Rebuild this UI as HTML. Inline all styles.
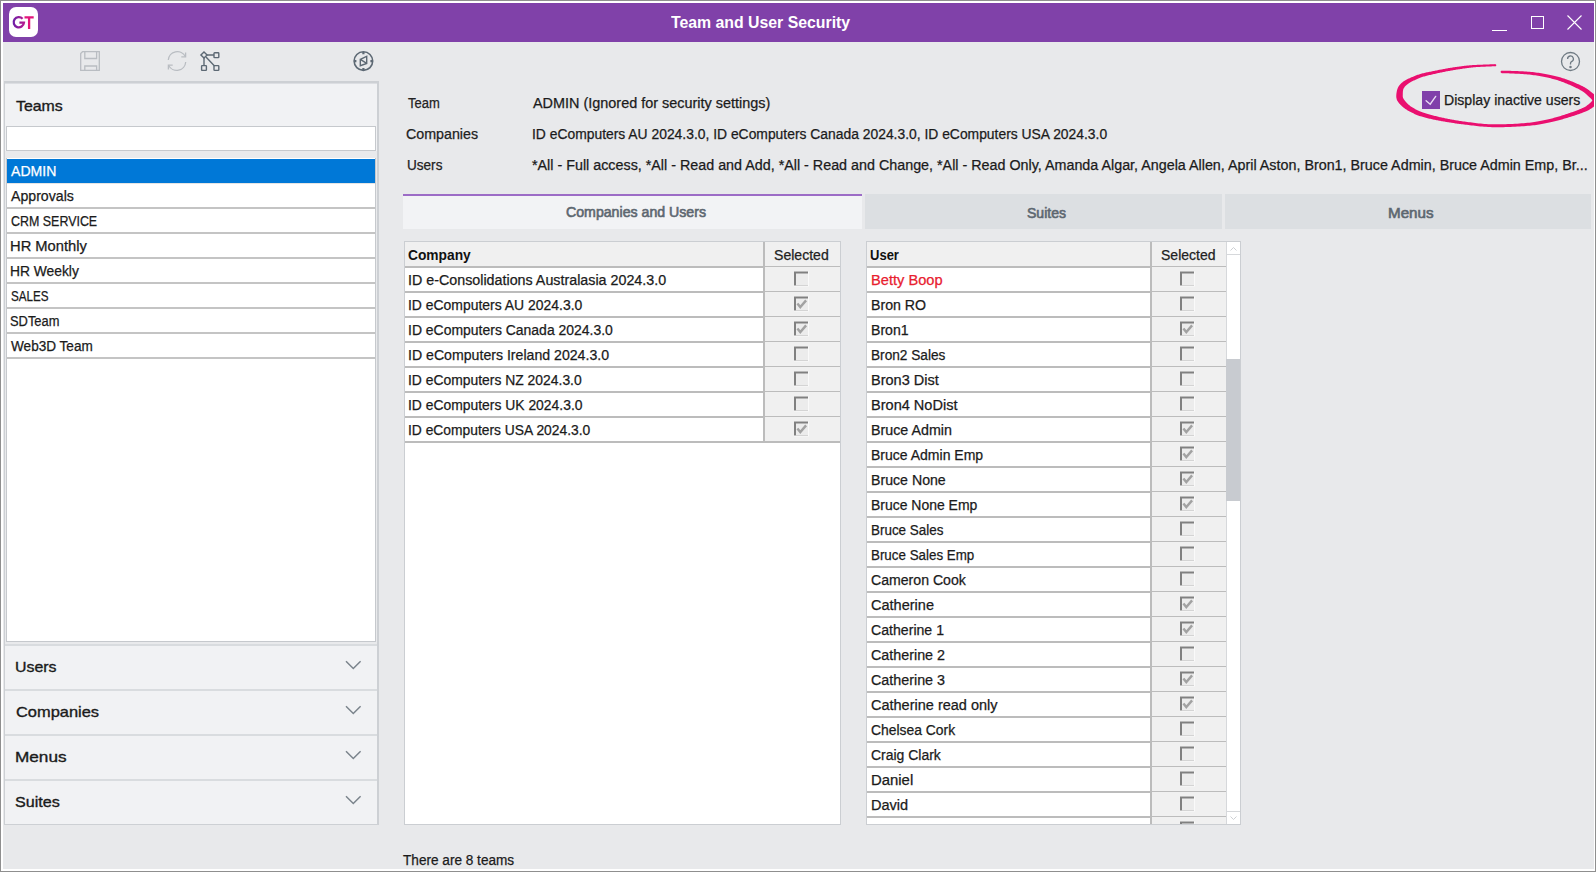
<!DOCTYPE html><html><head><meta charset="utf-8"><title>Team and User Security</title><style>
*{box-sizing:border-box;margin:0;padding:0}
html,body{width:1596px;height:872px;overflow:hidden;background:#fff;font-family:"Liberation Sans",sans-serif}
.a{position:absolute}
.t{position:absolute;white-space:nowrap;transform-origin:0 0;-webkit-text-stroke:0.25px currentColor}
svg{position:absolute;overflow:visible}
</style></head><body>
<div class="a" style="left:0;top:0;width:1596px;height:872px;border:1px solid #8f8f8f;background:#fff"></div>
<div class="a" style="left:3px;top:2.6px;width:1590.6px;height:39.6px;background:#8041a9"></div>
<div class="a" style="left:3px;top:42px;width:1591px;height:826.5px;background:#e8e9eb"></div>
<div class="a" style="left:8.6px;top:7.2px;width:29.6px;height:30.2px;border-radius:7px;background:#fff"></div>
<svg style="left:0;top:0" width="50" height="50" fill="none" stroke-width="2.3"><defs><linearGradient id="gg" x1="0" x2="1"><stop offset="0" stop-color="#6f1fa6"/><stop offset="1" stop-color="#b41a90"/></linearGradient></defs>
<path d="M22.6 18.7A5.15 5.15 0 1 0 23.95 22.7H19.4" stroke="url(#gg)"/><path d="M24.5 17.35H33.7M29.1 17.35V28.9" stroke="#e2167a"/></svg>
<div class="t" style="left:670.80px;top:15.26px;font-size:16px;line-height:16px;font-weight:700;color:#fff;transform:scaleX(0.9890);-webkit-text-stroke:0;">Team and User Security</div>
<div class="a" style="left:1492px;top:30px;width:15px;height:1px;background:#fff"></div>
<div class="a" style="left:1531px;top:16px;width:13px;height:13px;border:1px solid #fff"></div>
<svg style="left:1566px;top:14px" width="17" height="17"><path d="M1.5 1.5L15.5 15.5M15.5 1.5L1.5 15.5" stroke="#fff" stroke-width="1.1"/></svg>
<svg style="left:80px;top:51px" width="20" height="20" fill="none" stroke="#b9bdc2" stroke-width="1.3">
<path d="M2.5 0.7H19.3V19.3H0.7V2.5Z"/><path d="M4.8 0.7V7.5H16.6V0.7"/><path d="M4.8 19.3V15H16.6V19.3"/></svg>
<svg style="left:167px;top:51px" width="20" height="20" fill="none" stroke="#b9bdc2" stroke-width="1.3">
<path d="M1.3 9A9 9 0 0 1 18.3 5.5"/><path d="M18.6 1.5V5.8H14.3"/>
<path d="M18.7 11A9 9 0 0 1 1.7 14.5"/><path d="M1.4 18.5V14.2H5.7"/></svg>
<svg style="left:200px;top:51px" width="20" height="20" fill="none" stroke="#5d6974" stroke-width="1.4">
<path d="M4 0.9L7.1 4 4 7.1 0.9 4Z"/><rect x="14" y="1.8" width="4.8" height="4.8" rx="0.6"/><rect x="1.6" y="14.6" width="4.8" height="4.8" rx="0.6"/><rect x="14" y="14.6" width="4.8" height="4.8" rx="0.6"/>
<path d="M7.1 4H14M4 7.1V14.6M6 6L14.5 15"/></svg>
<svg style="left:353px;top:51px" width="21" height="21" fill="none" stroke="#5d6974" stroke-width="1.6">
<circle cx="10.4" cy="10.1" r="9.3"/><path d="M10.4 1V3.2M10.4 17V19.2M1.2 10.1H3.4M17.4 10.1H19.6" stroke-width="2.2"/>
<path d="M7.3 8.3L13.7 5.4V12.4L7.3 14.7Z M7.3 8.3L13.7 12.4" stroke-width="1.4"/></svg>
<svg style="left:1560px;top:51px" width="21" height="21" fill="none" stroke="#6f7a83" stroke-width="1.3">
<circle cx="10.5" cy="10.5" r="9"/><path d="M7.6 8A2.9 2.9 0 1 1 11.5 10.6C10.7 11 10.5 11.5 10.5 12.6V13.4"/><circle cx="10.5" cy="16" r="0.6" fill="#6f7a83"/></svg>
<div class="a" style="left:4px;top:81px;width:375px;height:744px;background:#f1f2f4;border:1px solid #cdd0d4;border-top:2px solid #cdd0d4;border-right:2px solid #cdd0d4"></div>
<div class="a" style="left:5px;top:83px;width:372px;height:1px;background:#dcdee2"></div>
<div class="t" style="left:16.40px;top:97.50px;font-size:15px;line-height:15px;font-weight:400;color:#1a1a1a;transform:scaleX(1.0591);-webkit-text-stroke:0.35px #1a1a1a">Teams</div>
<div class="a" style="left:6px;top:126px;width:370px;height:25px;background:#fff;border:1px solid #c6c9cd"></div>
<div class="a" style="left:5px;top:151px;width:372px;height:493px;background:#e9eaec"></div>
<div class="a" style="left:6px;top:158px;width:370px;height:484px;background:#fff;border:1px solid #c6c9cd;border-top:0"></div>
<div class="a" style="left:7px;top:158.5px;width:368px;height:24.5px;background:#0078d7"></div>
<div class="a" style="left:7px;top:183px;width:368px;height:1px;background:#e4e4e4"></div>
<div class="t" style="left:11.40px;top:164.45px;font-size:14px;line-height:14px;font-weight:400;color:#fff;transform:scaleX(1.0045);">ADMIN</div>
<div class="a" style="left:7px;top:207px;width:368px;height:1.8px;background:#c4c4c4"></div>
<div class="t" style="left:11.40px;top:189.45px;font-size:14px;line-height:14px;font-weight:400;color:#1b1b1b;transform:scaleX(1.0097);">Approvals</div>
<div class="a" style="left:7px;top:232px;width:368px;height:1.8px;background:#c4c4c4"></div>
<div class="t" style="left:10.51px;top:214.45px;font-size:14px;line-height:14px;font-weight:400;color:#1b1b1b;transform:scaleX(0.8885);">CRM SERVICE</div>
<div class="a" style="left:7px;top:257px;width:368px;height:1.8px;background:#c4c4c4"></div>
<div class="t" style="left:10.35px;top:239.45px;font-size:14px;line-height:14px;font-weight:400;color:#1b1b1b;transform:scaleX(1.0514);">HR Monthly</div>
<div class="a" style="left:7px;top:282px;width:368px;height:1.8px;background:#c4c4c4"></div>
<div class="t" style="left:10.41px;top:264.45px;font-size:14px;line-height:14px;font-weight:400;color:#1b1b1b;transform:scaleX(0.9870);">HR Weekly</div>
<div class="a" style="left:7px;top:307px;width:368px;height:1.8px;background:#c4c4c4"></div>
<div class="t" style="left:10.57px;top:289.45px;font-size:14px;line-height:14px;font-weight:400;color:#1b1b1b;transform:scaleX(0.8318);">SALES</div>
<div class="a" style="left:7px;top:332px;width:368px;height:1.8px;background:#c4c4c4"></div>
<div class="t" style="left:10.48px;top:314.45px;font-size:14px;line-height:14px;font-weight:400;color:#1b1b1b;transform:scaleX(0.9212);">SDTeam</div>
<div class="a" style="left:7px;top:357px;width:368px;height:1.8px;background:#c4c4c4"></div>
<div class="t" style="left:11.40px;top:339.45px;font-size:14px;line-height:14px;font-weight:400;color:#1b1b1b;transform:scaleX(0.9702);">Web3D Team</div>
<div class="a" style="left:5px;top:644px;width:372px;height:2px;background:#d9dcdf"></div>
<div class="t" style="left:15.34px;top:659.20px;font-size:15px;line-height:15px;font-weight:400;color:#1a1a1a;transform:scaleX(1.0605);-webkit-text-stroke:0.35px #1a1a1a">Users</div>
<svg style="left:345px;top:660px" width="17" height="10" fill="none" stroke="#7b848c" stroke-width="1.5"><path d="M1 1.3L8.3 8.5 15.6 1.3"/></svg>
<div class="a" style="left:5px;top:689px;width:372px;height:2px;background:#d9dcdf"></div>
<div class="t" style="left:16.40px;top:704.20px;font-size:15px;line-height:15px;font-weight:400;color:#1a1a1a;transform:scaleX(1.0947);-webkit-text-stroke:0.35px #1a1a1a">Companies</div>
<svg style="left:345px;top:705px" width="17" height="10" fill="none" stroke="#7b848c" stroke-width="1.5"><path d="M1 1.3L8.3 8.5 15.6 1.3"/></svg>
<div class="a" style="left:5px;top:734px;width:372px;height:2px;background:#d9dcdf"></div>
<div class="t" style="left:15.25px;top:749.20px;font-size:15px;line-height:15px;font-weight:400;color:#1a1a1a;transform:scaleX(1.1455);-webkit-text-stroke:0.35px #1a1a1a">Menus</div>
<svg style="left:345px;top:750px" width="17" height="10" fill="none" stroke="#7b848c" stroke-width="1.5"><path d="M1 1.3L8.3 8.5 15.6 1.3"/></svg>
<div class="a" style="left:5px;top:779px;width:372px;height:2px;background:#d9dcdf"></div>
<div class="t" style="left:15.32px;top:794.20px;font-size:15px;line-height:15px;font-weight:400;color:#1a1a1a;transform:scaleX(1.0756);-webkit-text-stroke:0.35px #1a1a1a">Suites</div>
<svg style="left:345px;top:795px" width="17" height="10" fill="none" stroke="#7b848c" stroke-width="1.5"><path d="M1 1.3L8.3 8.5 15.6 1.3"/></svg>
<div class="t" style="left:407.50px;top:95.75px;font-size:14px;line-height:14px;font-weight:400;color:#222;transform:scaleX(0.9273);">Team</div>
<div class="t" style="left:406.48px;top:127.05px;font-size:14px;line-height:14px;font-weight:400;color:#222;transform:scaleX(1.0174);">Companies</div>
<div class="t" style="left:406.53px;top:158.35px;font-size:14px;line-height:14px;font-weight:400;color:#222;transform:scaleX(0.9686);">Users</div>
<div class="t" style="left:532.80px;top:95.75px;font-size:14px;line-height:14px;font-weight:400;color:#1b1b1b;transform:scaleX(1.0300);">ADMIN (Ignored for security settings)</div>
<div class="t" style="left:531.81px;top:127.05px;font-size:14px;line-height:14px;font-weight:400;color:#1b1b1b;transform:scaleX(0.9907);">ID eComputers AU 2024.3.0, ID eComputers Canada 2024.3.0, ID eComputers USA 2024.3.0</div>
<div class="t" style="left:531.78px;top:158.35px;font-size:14px;line-height:14px;font-weight:400;color:#1b1b1b;transform:scaleX(1.0225);">*All - Full access, *All - Read and Add, *All - Read and Change, *All - Read Only, Amanda Algar, Angela Allen, April Aston, Bron1, Bruce Admin, Bruce Admin Emp, Br...</div>
<div class="t" style="left:1444.49px;top:92.65px;font-size:14px;line-height:14px;font-weight:400;color:#1b1b1b;transform:scaleX(1.0067);">Display inactive users</div>
<div class="t" style="left:403.40px;top:853.05px;font-size:14px;line-height:14px;font-weight:400;color:#1b1b1b;transform:scaleX(0.9719);">There are 8 teams</div>
<div class="a" style="left:1422px;top:91px;width:18px;height:18px;background:#8040aa"></div>
<svg style="left:1422px;top:91px" width="18" height="18" fill="none" stroke="#e9dcf3" stroke-width="1.35" stroke-linecap="round"><path d="M4.1 9.8L8.2 13.2 13.7 5.4"/></svg>
<div class="a" style="left:0;top:0;width:1594px;height:872px;overflow:hidden"><svg style="left:0;top:0" width="1596" height="872"><path d="M1495.26 64.18 L1493.05 64.26 L1492.49 64.28 L1491.90 64.30 L1491.29 64.32 L1490.14 64.35 L1488.91 64.40 L1487.62 64.44 L1486.28 64.48 L1484.92 64.53 L1483.56 64.58 L1482.21 64.63 L1480.90 64.68 L1479.63 64.73 L1478.43 64.79 L1477.29 64.84 L1476.22 64.89 L1475.22 64.94 L1474.28 65.00 L1473.41 65.05 L1472.59 65.10 L1471.82 65.15 L1471.07 65.21 L1470.34 65.26 L1469.64 65.32 L1468.94 65.38 L1468.24 65.45 L1467.54 65.52 L1466.82 65.59 L1466.08 65.67 L1465.32 65.75 L1464.53 65.85 L1463.72 65.94 L1462.87 66.05 L1462.00 66.16 L1461.11 66.27 L1460.19 66.39 L1459.26 66.52 L1458.31 66.65 L1457.35 66.79 L1456.39 66.93 L1455.42 67.07 L1454.46 67.22 L1453.50 67.37 L1452.54 67.52 L1451.59 67.67 L1450.65 67.82 L1449.72 67.97 L1448.81 68.12 L1447.90 68.27 L1447.01 68.43 L1446.12 68.58 L1445.25 68.74 L1444.38 68.90 L1443.51 69.06 L1442.66 69.22 L1441.80 69.38 L1440.95 69.54 L1440.10 69.71 L1439.25 69.87 L1438.40 70.04 L1437.54 70.21 L1436.69 70.38 L1435.82 70.56 L1434.95 70.73 L1434.08 70.91 L1433.19 71.08 L1432.30 71.26 L1431.41 71.44 L1430.51 71.63 L1429.60 71.81 L1428.70 72.00 L1427.80 72.18 L1426.90 72.37 L1426.02 72.57 L1425.15 72.76 L1424.30 72.96 L1423.47 73.16 L1422.66 73.36 L1421.87 73.57 L1421.11 73.78 L1420.37 73.99 L1419.65 74.20 L1418.96 74.42 L1418.29 74.64 L1417.64 74.86 L1417.01 75.08 L1416.40 75.31 L1415.81 75.54 L1415.23 75.76 L1414.67 75.99 L1414.11 76.22 L1413.57 76.44 L1413.04 76.66 L1412.52 76.88 L1412.00 77.10 L1411.50 77.32 L1411.00 77.53 L1410.50 77.74 L1410.02 77.95 L1409.53 78.16 L1409.06 78.38 L1408.59 78.59 L1408.12 78.80 L1407.66 79.02 L1407.20 79.24 L1406.75 79.47 L1406.31 79.71 L1405.87 79.96 L1405.43 80.21 L1405.00 80.47 L1404.58 80.73 L1404.16 81.00 L1403.75 81.29 L1403.35 81.57 L1402.95 81.87 L1402.56 82.17 L1402.18 82.48 L1401.80 82.79 L1401.43 83.12 L1401.07 83.45 L1400.71 83.80 L1400.36 84.15 L1400.02 84.52 L1399.70 84.90 L1399.38 85.29 L1399.07 85.70 L1398.78 86.13 L1398.51 86.57 L1398.25 87.02 L1398.02 87.48 L1397.80 87.95 L1397.61 88.43 L1397.43 88.91 L1397.27 89.39 L1397.13 89.86 L1397.01 90.33 L1396.90 90.79 L1396.80 91.25 L1396.71 91.69 L1396.63 92.13 L1396.57 92.55 L1396.51 92.96 L1396.46 93.35 L1396.41 93.74 L1396.37 94.12 L1396.34 94.49 L1396.31 94.87 L1396.28 95.25 L1396.26 95.64 L1396.26 96.05 L1396.27 96.48 L1396.29 96.92 L1396.33 97.39 L1396.39 97.87 L1396.49 98.36 L1396.61 98.87 L1396.77 99.38 L1396.96 99.88 L1397.19 100.39 L1397.44 100.88 L1397.72 101.37 L1398.02 101.84 L1398.35 102.31 L1398.70 102.76 L1399.06 103.21 L1399.44 103.65 L1399.83 104.09 L1400.24 104.51 L1400.65 104.93 L1401.07 105.35 L1401.50 105.75 L1401.93 106.14 L1402.36 106.53 L1402.79 106.91 L1403.23 107.27 L1403.66 107.63 L1404.10 107.98 L1404.54 108.31 L1404.98 108.64 L1405.43 108.96 L1405.88 109.27 L1406.33 109.57 L1406.79 109.87 L1407.25 110.16 L1407.72 110.44 L1408.19 110.72 L1408.67 110.99 L1409.16 111.26 L1409.65 111.53 L1410.15 111.79 L1410.65 112.05 L1411.17 112.32 L1411.68 112.58 L1412.21 112.84 L1412.75 113.10 L1413.29 113.36 L1413.84 113.62 L1414.40 113.88 L1414.97 114.14 L1415.56 114.39 L1416.16 114.65 L1416.77 114.90 L1417.41 115.15 L1418.06 115.40 L1418.74 115.65 L1419.43 115.89 L1420.15 116.13 L1420.89 116.37 L1421.66 116.61 L1422.45 116.85 L1423.27 117.08 L1424.11 117.31 L1424.96 117.54 L1425.84 117.77 L1426.73 117.99 L1427.62 118.21 L1428.53 118.43 L1429.44 118.64 L1430.35 118.85 L1431.26 119.06 L1432.17 119.26 L1433.06 119.46 L1433.96 119.65 L1434.84 119.84 L1435.72 120.02 L1436.59 120.20 L1437.45 120.37 L1438.31 120.54 L1439.17 120.70 L1440.03 120.86 L1440.89 121.02 L1441.74 121.17 L1442.60 121.32 L1443.46 121.47 L1444.33 121.61 L1445.20 121.76 L1446.07 121.90 L1446.94 122.04 L1447.81 122.18 L1448.68 122.32 L1449.53 122.46 L1450.38 122.60 L1451.22 122.73 L1452.06 122.86 L1452.90 122.99 L1453.73 123.12 L1454.59 123.25 L1455.46 123.38 L1456.36 123.50 L1457.29 123.63 L1458.27 123.76 L1459.31 123.90 L1460.40 124.03 L1461.56 124.18 L1462.78 124.33 L1464.07 124.49 L1465.43 124.66 L1466.85 124.83 L1468.35 125.02 L1469.90 125.21 L1471.52 125.41 L1473.18 125.62 L1474.90 125.82 L1476.67 126.02 L1478.47 126.22 L1480.32 126.40 L1482.20 126.57 L1484.11 126.72 L1486.06 126.86 L1488.05 126.97 L1490.08 127.06 L1492.16 127.13 L1494.28 127.17 L1496.46 127.19 L1498.69 127.19 L1500.96 127.17 L1503.28 127.13 L1505.64 127.07 L1508.01 127.00 L1510.39 126.92 L1512.76 126.82 L1515.10 126.71 L1517.39 126.59 L1519.63 126.47 L1521.80 126.33 L1523.88 126.19 L1525.89 126.03 L1527.81 125.87 L1529.64 125.70 L1531.39 125.52 L1533.06 125.33 L1534.65 125.13 L1536.18 124.92 L1537.66 124.70 L1539.08 124.48 L1540.46 124.24 L1541.80 124.00 L1543.10 123.76 L1544.37 123.51 L1545.62 123.26 L1546.84 123.01 L1548.05 122.76 L1549.24 122.51 L1550.40 122.26 L1551.55 122.01 L1552.67 121.76 L1553.77 121.51 L1554.85 121.26 L1555.90 121.01 L1556.93 120.75 L1557.93 120.49 L1558.92 120.23 L1559.90 119.97 L1560.87 119.70 L1561.83 119.43 L1562.79 119.15 L1563.76 118.87 L1564.74 118.58 L1565.74 118.28 L1566.75 117.98 L1567.77 117.67 L1568.82 117.35 L1569.87 117.02 L1570.94 116.69 L1572.02 116.34 L1573.10 116.00 L1574.18 115.64 L1575.25 115.29 L1576.31 114.94 L1577.34 114.58 L1578.35 114.23 L1579.32 113.89 L1580.26 113.56 L1581.16 113.23 L1582.02 112.91 L1582.83 112.60 L1583.59 112.31 L1584.32 112.02 L1585.00 111.74 L1585.64 111.47 L1586.25 111.21 L1586.83 110.95 L1587.38 110.69 L1587.92 110.43 L1588.43 110.17 L1588.93 109.90 L1589.42 109.63 L1589.89 109.35 L1590.36 109.06 L1590.82 108.77 L1591.28 108.47 L1591.74 108.16 L1592.21 107.85 L1592.68 107.52 L1593.15 107.18 L1593.63 106.83 L1594.11 106.46 L1594.59 106.08 L1595.08 105.68 L1595.55 105.26 L1596.01 104.82 L1596.46 104.34 L1596.89 103.83 L1597.29 103.26 L1597.64 102.62 L1597.92 101.91 L1598.11 101.13 L1598.18 100.31 L1598.11 99.48 L1597.92 98.70 L1597.62 97.98 L1597.26 97.35 L1596.85 96.79 L1596.42 96.30 L1595.97 95.85 L1595.51 95.43 L1595.04 95.04 L1594.57 94.66 L1594.11 94.30 L1593.65 93.95 L1593.20 93.61 L1592.75 93.27 L1592.31 92.93 L1591.88 92.59 L1591.45 92.25 L1591.02 91.91 L1590.59 91.56 L1590.16 91.21 L1589.71 90.85 L1589.24 90.48 L1588.76 90.11 L1588.25 89.73 L1587.73 89.35 L1587.17 88.96 L1586.58 88.57 L1585.96 88.17 L1585.30 87.77 L1584.61 87.36 L1583.87 86.95 L1583.09 86.53 L1582.26 86.11 L1581.40 85.68 L1580.49 85.24 L1579.54 84.79 L1578.56 84.34 L1577.54 83.88 L1576.50 83.42 L1575.43 82.96 L1574.36 82.50 L1573.27 82.05 L1572.18 81.61 L1571.09 81.18 L1570.01 80.76 L1568.94 80.35 L1567.89 79.96 L1566.85 79.58 L1565.83 79.22 L1564.82 78.87 L1563.83 78.53 L1562.85 78.21 L1561.88 77.90 L1560.91 77.60 L1559.93 77.30 L1558.95 77.02 L1557.95 76.74 L1556.94 76.47 L1555.90 76.20 L1554.85 75.94 L1553.76 75.69 L1552.65 75.43 L1551.50 75.18 L1550.33 74.93 L1549.12 74.69 L1547.88 74.44 L1546.61 74.20 L1545.31 73.97 L1543.98 73.73 L1542.63 73.50 L1541.26 73.28 L1539.87 73.06 L1538.45 72.85 L1537.02 72.65 L1535.57 72.46 L1534.10 72.27 L1532.61 72.10 L1531.09 71.94 L1529.53 71.79 L1527.92 71.65 L1526.27 71.52 L1524.56 71.41 L1522.82 71.31 L1521.02 71.22 L1519.19 71.14 L1517.34 71.07 L1515.49 71.01 L1513.66 70.95 L1511.87 70.91 L1510.15 70.87 L1508.52 70.83 L1507.00 70.79 L1506.19 70.77 L1505.41 70.76 L1504.67 70.75 L1501.74 70.66 L1501.66 73.14 L1504.60 73.23 L1505.34 73.26 L1506.12 73.28 L1506.93 73.31 L1508.45 73.36 L1510.08 73.42 L1511.79 73.48 L1513.57 73.55 L1515.39 73.63 L1517.23 73.72 L1519.07 73.81 L1520.88 73.91 L1522.65 74.03 L1524.37 74.15 L1526.05 74.29 L1527.67 74.44 L1529.25 74.60 L1530.78 74.77 L1532.27 74.95 L1533.73 75.15 L1535.17 75.35 L1536.59 75.57 L1538.00 75.79 L1539.39 76.02 L1540.76 76.26 L1542.10 76.51 L1543.43 76.76 L1544.73 77.01 L1546.00 77.28 L1547.24 77.54 L1548.45 77.81 L1549.63 78.08 L1550.78 78.35 L1551.89 78.63 L1552.96 78.91 L1554.01 79.19 L1555.02 79.48 L1556.01 79.77 L1556.98 80.06 L1557.93 80.37 L1558.87 80.68 L1559.80 81.00 L1560.73 81.32 L1561.66 81.66 L1562.60 82.01 L1563.55 82.37 L1564.52 82.74 L1565.50 83.13 L1566.50 83.53 L1567.51 83.95 L1568.54 84.38 L1569.58 84.83 L1570.63 85.28 L1571.68 85.75 L1572.73 86.23 L1573.76 86.70 L1574.78 87.19 L1575.78 87.67 L1576.75 88.14 L1577.68 88.61 L1578.57 89.07 L1579.42 89.52 L1580.21 89.96 L1580.96 90.39 L1581.66 90.80 L1582.30 91.20 L1582.90 91.59 L1583.46 91.97 L1583.98 92.34 L1584.46 92.71 L1584.92 93.07 L1585.35 93.43 L1585.77 93.79 L1586.18 94.14 L1586.58 94.51 L1586.97 94.87 L1587.36 95.25 L1587.77 95.63 L1588.17 96.02 L1588.59 96.41 L1589.01 96.80 L1589.43 97.19 L1589.85 97.58 L1590.26 97.97 L1590.66 98.34 L1591.03 98.70 L1591.38 99.05 L1591.68 99.38 L1591.94 99.69 L1592.15 99.96 L1592.29 100.18 L1592.38 100.35 L1592.42 100.44 L1592.41 100.45 L1592.39 100.40 L1592.38 100.31 L1592.39 100.23 L1592.40 100.20 L1592.40 100.24 L1592.35 100.36 L1592.25 100.55 L1592.10 100.80 L1591.89 101.08 L1591.64 101.40 L1591.34 101.73 L1591.01 102.07 L1590.65 102.43 L1590.28 102.78 L1589.89 103.13 L1589.50 103.48 L1589.11 103.82 L1588.73 104.15 L1588.34 104.47 L1587.97 104.78 L1587.60 105.07 L1587.23 105.35 L1586.86 105.62 L1586.49 105.88 L1586.10 106.14 L1585.69 106.40 L1585.26 106.67 L1584.80 106.93 L1584.31 107.20 L1583.78 107.48 L1583.21 107.76 L1582.59 108.06 L1581.93 108.36 L1581.22 108.68 L1580.46 109.01 L1579.65 109.34 L1578.80 109.69 L1577.90 110.04 L1576.95 110.40 L1575.98 110.77 L1574.97 111.14 L1573.94 111.51 L1572.90 111.88 L1571.84 112.25 L1570.79 112.62 L1569.73 112.98 L1568.68 113.34 L1567.64 113.68 L1566.61 114.02 L1565.60 114.36 L1564.61 114.68 L1563.63 115.00 L1562.67 115.31 L1561.72 115.61 L1560.78 115.91 L1559.84 116.20 L1558.90 116.49 L1557.95 116.77 L1556.99 117.05 L1556.02 117.32 L1555.02 117.60 L1554.00 117.87 L1552.96 118.14 L1551.88 118.41 L1550.78 118.68 L1549.65 118.95 L1548.50 119.22 L1547.33 119.49 L1546.14 119.76 L1544.93 120.03 L1543.71 120.30 L1542.46 120.57 L1541.18 120.83 L1539.88 121.09 L1538.54 121.35 L1537.15 121.59 L1535.72 121.83 L1534.23 122.06 L1532.67 122.28 L1531.04 122.48 L1529.33 122.68 L1527.53 122.87 L1525.64 123.04 L1523.66 123.21 L1521.59 123.37 L1519.44 123.52 L1517.22 123.66 L1514.95 123.79 L1512.62 123.91 L1510.27 124.02 L1507.91 124.12 L1505.55 124.20 L1503.22 124.27 L1500.92 124.31 L1498.67 124.34 L1496.47 124.35 L1494.32 124.34 L1492.23 124.30 L1490.18 124.23 L1488.19 124.15 L1486.24 124.04 L1484.33 123.90 L1482.44 123.75 L1480.59 123.58 L1478.77 123.39 L1476.98 123.19 L1475.24 122.99 L1473.53 122.78 L1471.87 122.57 L1470.27 122.36 L1468.71 122.15 L1467.22 121.96 L1465.80 121.77 L1464.44 121.58 L1463.16 121.41 L1461.94 121.24 L1460.80 121.08 L1459.72 120.92 L1458.70 120.77 L1457.74 120.61 L1456.82 120.46 L1455.94 120.31 L1455.09 120.16 L1454.25 120.01 L1453.43 119.86 L1452.60 119.71 L1451.78 119.55 L1450.94 119.39 L1450.10 119.23 L1449.25 119.06 L1448.40 118.90 L1447.54 118.73 L1446.68 118.56 L1445.82 118.39 L1444.96 118.22 L1444.11 118.04 L1443.26 117.86 L1442.42 117.69 L1441.58 117.51 L1440.75 117.32 L1439.91 117.13 L1439.08 116.94 L1438.24 116.75 L1437.40 116.54 L1436.55 116.34 L1435.69 116.12 L1434.83 115.91 L1433.96 115.68 L1433.09 115.45 L1432.20 115.22 L1431.32 114.98 L1430.43 114.74 L1429.55 114.49 L1428.67 114.25 L1427.80 114.00 L1426.95 113.74 L1426.12 113.49 L1425.30 113.24 L1424.51 112.98 L1423.75 112.73 L1423.01 112.48 L1422.30 112.22 L1421.61 111.97 L1420.95 111.72 L1420.32 111.47 L1419.71 111.22 L1419.12 110.97 L1418.55 110.71 L1418.00 110.46 L1417.46 110.21 L1416.93 109.95 L1416.41 109.69 L1415.91 109.43 L1415.41 109.16 L1414.92 108.90 L1414.43 108.62 L1413.95 108.35 L1413.48 108.08 L1413.02 107.81 L1412.57 107.53 L1412.13 107.26 L1411.71 106.98 L1411.29 106.71 L1410.89 106.43 L1410.50 106.16 L1410.12 105.88 L1409.74 105.60 L1409.38 105.32 L1409.03 105.03 L1408.68 104.74 L1408.34 104.44 L1408.00 104.13 L1407.67 103.82 L1407.33 103.49 L1407.00 103.16 L1406.67 102.81 L1406.34 102.45 L1406.01 102.09 L1405.68 101.71 L1405.37 101.33 L1405.06 100.95 L1404.77 100.58 L1404.49 100.20 L1404.23 99.83 L1403.99 99.48 L1403.77 99.13 L1403.57 98.81 L1403.40 98.51 L1403.26 98.23 L1403.14 97.98 L1403.05 97.75 L1402.98 97.55 L1402.92 97.36 L1402.88 97.19 L1402.84 97.02 L1402.81 96.85 L1402.79 96.67 L1402.77 96.48 L1402.76 96.26 L1402.76 96.03 L1402.76 95.77 L1402.76 95.49 L1402.77 95.19 L1402.78 94.87 L1402.79 94.54 L1402.79 94.20 L1402.80 93.85 L1402.81 93.50 L1402.82 93.14 L1402.83 92.79 L1402.85 92.44 L1402.86 92.10 L1402.88 91.76 L1402.91 91.43 L1402.94 91.10 L1402.98 90.78 L1403.03 90.48 L1403.08 90.18 L1403.15 89.90 L1403.22 89.62 L1403.31 89.35 L1403.40 89.08 L1403.51 88.82 L1403.63 88.55 L1403.77 88.28 L1403.93 88.00 L1404.10 87.72 L1404.29 87.44 L1404.50 87.16 L1404.72 86.87 L1404.95 86.58 L1405.19 86.30 L1405.45 86.01 L1405.72 85.73 L1406.00 85.45 L1406.29 85.17 L1406.58 84.91 L1406.88 84.64 L1407.19 84.39 L1407.51 84.14 L1407.83 83.89 L1408.17 83.65 L1408.51 83.42 L1408.87 83.19 L1409.24 82.96 L1409.62 82.73 L1410.02 82.51 L1410.43 82.28 L1410.85 82.05 L1411.29 81.82 L1411.74 81.58 L1412.20 81.34 L1412.67 81.11 L1413.14 80.86 L1413.63 80.62 L1414.12 80.38 L1414.62 80.13 L1415.12 79.88 L1415.63 79.64 L1416.15 79.39 L1416.67 79.15 L1417.21 78.91 L1417.75 78.67 L1418.31 78.43 L1418.89 78.19 L1419.48 77.96 L1420.10 77.73 L1420.73 77.50 L1421.40 77.27 L1422.08 77.04 L1422.80 76.82 L1423.54 76.60 L1424.31 76.38 L1425.11 76.16 L1425.93 75.94 L1426.77 75.73 L1427.63 75.52 L1428.50 75.30 L1429.38 75.09 L1430.27 74.89 L1431.17 74.68 L1432.06 74.48 L1432.95 74.27 L1433.83 74.08 L1434.71 73.88 L1435.58 73.68 L1436.44 73.49 L1437.30 73.30 L1438.15 73.12 L1439.00 72.93 L1439.84 72.75 L1440.68 72.57 L1441.52 72.40 L1442.36 72.22 L1443.21 72.05 L1444.06 71.88 L1444.91 71.71 L1445.77 71.54 L1446.63 71.37 L1447.51 71.21 L1448.39 71.04 L1449.29 70.88 L1450.19 70.72 L1451.11 70.55 L1452.04 70.39 L1452.98 70.23 L1453.93 70.07 L1454.88 69.91 L1455.84 69.75 L1456.80 69.60 L1457.75 69.45 L1458.70 69.30 L1459.64 69.16 L1460.56 69.02 L1461.47 68.88 L1462.36 68.75 L1463.22 68.62 L1464.06 68.50 L1464.86 68.38 L1465.64 68.27 L1466.39 68.17 L1467.12 68.07 L1467.82 67.97 L1468.51 67.88 L1469.20 67.79 L1469.88 67.71 L1470.57 67.63 L1471.28 67.55 L1472.01 67.47 L1472.78 67.40 L1473.58 67.32 L1474.44 67.25 L1475.36 67.18 L1476.35 67.11 L1477.41 67.04 L1478.54 66.97 L1479.74 66.90 L1481.00 66.83 L1482.30 66.77 L1483.65 66.70 L1485.01 66.64 L1486.36 66.58 L1487.70 66.52 L1488.99 66.47 L1490.21 66.42 L1491.36 66.38 L1491.98 66.35 L1492.57 66.33 L1493.13 66.30 L1495.34 66.22Z" fill="#ea0f6f"/><circle cx="1495.30" cy="65.20" r="1" fill="#ea0f6f"/><circle cx="1501.70" cy="71.90" r="1.1" fill="#ea0f6f"/></svg></div>
<div class="a" style="left:403px;top:194px;width:459px;height:2px;background:#9c6cc6"></div>
<div class="a" style="left:403px;top:196px;width:459px;height:32.6px;background:#f2f3f5"></div>
<div class="a" style="left:865px;top:194px;width:357px;height:34.6px;background:#dcdfe2"></div>
<div class="a" style="left:1225px;top:194px;width:366px;height:34.6px;background:#dcdfe2"></div>
<div class="t" style="left:565.80px;top:205.45px;font-size:14px;line-height:14px;font-weight:400;color:#5d6770;transform:scaleX(1.0108);-webkit-text-stroke:0.6px #5d6770">Companies and Users</div>
<div class="t" style="left:1027.00px;top:205.75px;font-size:14px;line-height:14px;font-weight:400;color:#5d6770;transform:scaleX(1.0026);-webkit-text-stroke:0.6px #5d6770">Suites</div>
<div class="t" style="left:1388.22px;top:205.75px;font-size:14px;line-height:14px;font-weight:400;color:#5d6770;transform:scaleX(1.0829);-webkit-text-stroke:0.6px #5d6770">Menus</div>
<div class="a" style="left:404px;top:241px;width:437px;height:584px;background:#fff;border:1px solid #cbced2"></div>
<div class="a" style="left:405px;top:242px;width:435px;height:24px;background:#f0f0f0"></div>
<div class="t" style="left:407.90px;top:249.02px;font-size:13.8px;line-height:13.8px;font-weight:700;color:#111;transform:scaleX(0.9984);-webkit-text-stroke:0;">Company</div>
<div class="t" style="left:774.18px;top:249.02px;font-size:13.8px;line-height:13.8px;font-weight:400;color:#222;transform:scaleX(1.0192);">Selected</div>
<div class="a" style="left:405px;top:266px;width:435px;height:2px;background:#bcbcbc"></div>
<div class="a" style="left:765px;top:267px;width:75px;height:25px;background:#f0f0f0"></div>
<div class="a" style="left:405px;top:291px;width:435px;height:2px;background:#bcbcbc"></div>
<div class="t" style="left:407.58px;top:273.05px;font-size:14px;line-height:14px;font-weight:400;color:#1b1b1b;transform:scaleX(1.0206);">ID e-Consolidations Australasia 2024.3.0</div>
<svg style="left:794px;top:272px" width="15" height="15"><g transform="translate(0,-0.5)"><rect x="0" y="0" width="15" height="15" fill="#fafafa"/><rect x="0" y="0" width="14" height="14" fill="#808080"/><rect x="2" y="2" width="12" height="12" fill="#ececec"/></g></svg>
<div class="a" style="left:765px;top:292px;width:75px;height:25px;background:#f0f0f0"></div>
<div class="a" style="left:405px;top:316px;width:435px;height:2px;background:#bcbcbc"></div>
<div class="t" style="left:407.60px;top:298.05px;font-size:14px;line-height:14px;font-weight:400;color:#1b1b1b;transform:scaleX(0.9954);">ID eComputers AU 2024.3.0</div>
<svg style="left:794px;top:297px" width="15" height="15"><g transform="translate(0,-0.5)"><rect x="0" y="0" width="15" height="15" fill="#fafafa"/><rect x="0" y="0" width="14" height="14" fill="#808080"/><rect x="2" y="2" width="12" height="12" fill="#ececec"/><path d="M3.4 6.9L6.3 10.6 12.1 3.9" fill="none" stroke="#a2a2a2" stroke-width="2.4"/></g></svg>
<div class="a" style="left:765px;top:317px;width:75px;height:25px;background:#f0f0f0"></div>
<div class="a" style="left:405px;top:341px;width:435px;height:2px;background:#bcbcbc"></div>
<div class="t" style="left:407.60px;top:323.05px;font-size:14px;line-height:14px;font-weight:400;color:#1b1b1b;transform:scaleX(0.9971);">ID eComputers Canada 2024.3.0</div>
<svg style="left:794px;top:322px" width="15" height="15"><g transform="translate(0,-0.5)"><rect x="0" y="0" width="15" height="15" fill="#fafafa"/><rect x="0" y="0" width="14" height="14" fill="#808080"/><rect x="2" y="2" width="12" height="12" fill="#ececec"/><path d="M3.4 6.9L6.3 10.6 12.1 3.9" fill="none" stroke="#a2a2a2" stroke-width="2.4"/></g></svg>
<div class="a" style="left:765px;top:342px;width:75px;height:25px;background:#f0f0f0"></div>
<div class="a" style="left:405px;top:366px;width:435px;height:2px;background:#bcbcbc"></div>
<div class="t" style="left:407.59px;top:348.05px;font-size:14px;line-height:14px;font-weight:400;color:#1b1b1b;transform:scaleX(1.0091);">ID eComputers Ireland 2024.3.0</div>
<svg style="left:794px;top:347px" width="15" height="15"><g transform="translate(0,-0.5)"><rect x="0" y="0" width="15" height="15" fill="#fafafa"/><rect x="0" y="0" width="14" height="14" fill="#808080"/><rect x="2" y="2" width="12" height="12" fill="#ececec"/></g></svg>
<div class="a" style="left:765px;top:367px;width:75px;height:25px;background:#f0f0f0"></div>
<div class="a" style="left:405px;top:391px;width:435px;height:2px;background:#bcbcbc"></div>
<div class="t" style="left:407.61px;top:373.05px;font-size:14px;line-height:14px;font-weight:400;color:#1b1b1b;transform:scaleX(0.9920);">ID eComputers NZ 2024.3.0</div>
<svg style="left:794px;top:372px" width="15" height="15"><g transform="translate(0,-0.5)"><rect x="0" y="0" width="15" height="15" fill="#fafafa"/><rect x="0" y="0" width="14" height="14" fill="#808080"/><rect x="2" y="2" width="12" height="12" fill="#ececec"/></g></svg>
<div class="a" style="left:765px;top:392px;width:75px;height:25px;background:#f0f0f0"></div>
<div class="a" style="left:405px;top:416px;width:435px;height:2px;background:#bcbcbc"></div>
<div class="t" style="left:407.61px;top:398.05px;font-size:14px;line-height:14px;font-weight:400;color:#1b1b1b;transform:scaleX(0.9920);">ID eComputers UK 2024.3.0</div>
<svg style="left:794px;top:397px" width="15" height="15"><g transform="translate(0,-0.5)"><rect x="0" y="0" width="15" height="15" fill="#fafafa"/><rect x="0" y="0" width="14" height="14" fill="#808080"/><rect x="2" y="2" width="12" height="12" fill="#ececec"/></g></svg>
<div class="a" style="left:765px;top:417px;width:75px;height:25px;background:#f0f0f0"></div>
<div class="a" style="left:405px;top:441px;width:435px;height:2px;background:#bcbcbc"></div>
<div class="t" style="left:407.61px;top:423.05px;font-size:14px;line-height:14px;font-weight:400;color:#1b1b1b;transform:scaleX(0.9880);">ID eComputers USA 2024.3.0</div>
<svg style="left:794px;top:422px" width="15" height="15"><g transform="translate(0,-0.5)"><rect x="0" y="0" width="15" height="15" fill="#fafafa"/><rect x="0" y="0" width="14" height="14" fill="#808080"/><rect x="2" y="2" width="12" height="12" fill="#ececec"/><path d="M3.4 6.9L6.3 10.6 12.1 3.9" fill="none" stroke="#a2a2a2" stroke-width="2.4"/></g></svg>
<div class="a" style="left:763px;top:242px;width:2px;height:200px;background:#bcbcbc"></div>
<div class="a" style="left:866px;top:241px;width:375px;height:584px;background:#fff;border:1px solid #cbced2"></div>
<div class="a" style="left:867px;top:242px;width:359px;height:24px;background:#f0f0f0"></div>
<div class="t" style="left:870.36px;top:249.02px;font-size:13.8px;line-height:13.8px;font-weight:700;color:#111;transform:scaleX(0.9433);-webkit-text-stroke:0;">User</div>
<div class="t" style="left:1160.58px;top:249.02px;font-size:13.8px;line-height:13.8px;font-weight:400;color:#222;transform:scaleX(1.0154);">Selected</div>
<div class="a" style="left:867px;top:266px;width:359px;height:2px;background:#bcbcbc"></div>
<div class="a" style="left:867px;top:267px;width:359px;height:557px;overflow:hidden">
<div class="a" style="left:283px;top:0px;width:76px;height:25px;background:#f0f0f0"></div>
<div class="a" style="left:0;top:24px;width:359px;height:2px;background:#bcbcbc"></div>
<div class="t" style="left:3.66px;top:6.05px;font-size:14px;line-height:14px;font-weight:400;color:#e8202f;transform:scaleX(1.0448);">Betty Boop</div>
<svg style="left:313px;top:5px" width="15" height="15"><g transform="translate(0,-0.5)"><rect x="0" y="0" width="15" height="15" fill="#fafafa"/><rect x="0" y="0" width="14" height="14" fill="#808080"/><rect x="2" y="2" width="12" height="12" fill="#ececec"/></g></svg>
<div class="a" style="left:283px;top:25px;width:76px;height:25px;background:#f0f0f0"></div>
<div class="a" style="left:0;top:49px;width:359px;height:2px;background:#bcbcbc"></div>
<div class="t" style="left:3.69px;top:31.05px;font-size:14px;line-height:14px;font-weight:400;color:#1b1b1b;transform:scaleX(1.0113);">Bron RO</div>
<svg style="left:313px;top:30px" width="15" height="15"><g transform="translate(0,-0.5)"><rect x="0" y="0" width="15" height="15" fill="#fafafa"/><rect x="0" y="0" width="14" height="14" fill="#808080"/><rect x="2" y="2" width="12" height="12" fill="#ececec"/></g></svg>
<div class="a" style="left:283px;top:50px;width:76px;height:25px;background:#f0f0f0"></div>
<div class="a" style="left:0;top:74px;width:359px;height:2px;background:#bcbcbc"></div>
<div class="t" style="left:3.69px;top:56.05px;font-size:14px;line-height:14px;font-weight:400;color:#1b1b1b;transform:scaleX(1.0083);">Bron1</div>
<svg style="left:313px;top:55px" width="15" height="15"><g transform="translate(0,-0.5)"><rect x="0" y="0" width="15" height="15" fill="#fafafa"/><rect x="0" y="0" width="14" height="14" fill="#808080"/><rect x="2" y="2" width="12" height="12" fill="#ececec"/><path d="M3.4 6.9L6.3 10.6 12.1 3.9" fill="none" stroke="#a2a2a2" stroke-width="2.4"/></g></svg>
<div class="a" style="left:283px;top:75px;width:76px;height:25px;background:#f0f0f0"></div>
<div class="a" style="left:0;top:99px;width:359px;height:2px;background:#bcbcbc"></div>
<div class="t" style="left:3.72px;top:81.05px;font-size:14px;line-height:14px;font-weight:400;color:#1b1b1b;transform:scaleX(0.9760);">Bron2 Sales</div>
<svg style="left:313px;top:80px" width="15" height="15"><g transform="translate(0,-0.5)"><rect x="0" y="0" width="15" height="15" fill="#fafafa"/><rect x="0" y="0" width="14" height="14" fill="#808080"/><rect x="2" y="2" width="12" height="12" fill="#ececec"/></g></svg>
<div class="a" style="left:283px;top:100px;width:76px;height:25px;background:#f0f0f0"></div>
<div class="a" style="left:0;top:124px;width:359px;height:2px;background:#bcbcbc"></div>
<div class="t" style="left:3.66px;top:106.05px;font-size:14px;line-height:14px;font-weight:400;color:#1b1b1b;transform:scaleX(1.0359);">Bron3 Dist</div>
<svg style="left:313px;top:105px" width="15" height="15"><g transform="translate(0,-0.5)"><rect x="0" y="0" width="15" height="15" fill="#fafafa"/><rect x="0" y="0" width="14" height="14" fill="#808080"/><rect x="2" y="2" width="12" height="12" fill="#ececec"/></g></svg>
<div class="a" style="left:283px;top:125px;width:76px;height:25px;background:#f0f0f0"></div>
<div class="a" style="left:0;top:149px;width:359px;height:2px;background:#bcbcbc"></div>
<div class="t" style="left:3.66px;top:131.05px;font-size:14px;line-height:14px;font-weight:400;color:#1b1b1b;transform:scaleX(1.0390);">Bron4 NoDist</div>
<svg style="left:313px;top:130px" width="15" height="15"><g transform="translate(0,-0.5)"><rect x="0" y="0" width="15" height="15" fill="#fafafa"/><rect x="0" y="0" width="14" height="14" fill="#808080"/><rect x="2" y="2" width="12" height="12" fill="#ececec"/></g></svg>
<div class="a" style="left:283px;top:150px;width:76px;height:25px;background:#f0f0f0"></div>
<div class="a" style="left:0;top:174px;width:359px;height:2px;background:#bcbcbc"></div>
<div class="t" style="left:3.68px;top:156.05px;font-size:14px;line-height:14px;font-weight:400;color:#1b1b1b;transform:scaleX(1.0192);">Bruce Admin</div>
<svg style="left:313px;top:155px" width="15" height="15"><g transform="translate(0,-0.5)"><rect x="0" y="0" width="15" height="15" fill="#fafafa"/><rect x="0" y="0" width="14" height="14" fill="#808080"/><rect x="2" y="2" width="12" height="12" fill="#ececec"/><path d="M3.4 6.9L6.3 10.6 12.1 3.9" fill="none" stroke="#a2a2a2" stroke-width="2.4"/></g></svg>
<div class="a" style="left:283px;top:175px;width:76px;height:25px;background:#f0f0f0"></div>
<div class="a" style="left:0;top:199px;width:359px;height:2px;background:#bcbcbc"></div>
<div class="t" style="left:3.70px;top:181.05px;font-size:14px;line-height:14px;font-weight:400;color:#1b1b1b;transform:scaleX(1.0009);">Bruce Admin Emp</div>
<svg style="left:313px;top:180px" width="15" height="15"><g transform="translate(0,-0.5)"><rect x="0" y="0" width="15" height="15" fill="#fafafa"/><rect x="0" y="0" width="14" height="14" fill="#808080"/><rect x="2" y="2" width="12" height="12" fill="#ececec"/><path d="M3.4 6.9L6.3 10.6 12.1 3.9" fill="none" stroke="#a2a2a2" stroke-width="2.4"/></g></svg>
<div class="a" style="left:283px;top:200px;width:76px;height:25px;background:#f0f0f0"></div>
<div class="a" style="left:0;top:224px;width:359px;height:2px;background:#bcbcbc"></div>
<div class="t" style="left:3.69px;top:206.05px;font-size:14px;line-height:14px;font-weight:400;color:#1b1b1b;transform:scaleX(1.0110);">Bruce None</div>
<svg style="left:313px;top:205px" width="15" height="15"><g transform="translate(0,-0.5)"><rect x="0" y="0" width="15" height="15" fill="#fafafa"/><rect x="0" y="0" width="14" height="14" fill="#808080"/><rect x="2" y="2" width="12" height="12" fill="#ececec"/><path d="M3.4 6.9L6.3 10.6 12.1 3.9" fill="none" stroke="#a2a2a2" stroke-width="2.4"/></g></svg>
<div class="a" style="left:283px;top:225px;width:76px;height:25px;background:#f0f0f0"></div>
<div class="a" style="left:0;top:249px;width:359px;height:2px;background:#bcbcbc"></div>
<div class="t" style="left:3.70px;top:231.05px;font-size:14px;line-height:14px;font-weight:400;color:#1b1b1b;transform:scaleX(0.9971);">Bruce None Emp</div>
<svg style="left:313px;top:230px" width="15" height="15"><g transform="translate(0,-0.5)"><rect x="0" y="0" width="15" height="15" fill="#fafafa"/><rect x="0" y="0" width="14" height="14" fill="#808080"/><rect x="2" y="2" width="12" height="12" fill="#ececec"/><path d="M3.4 6.9L6.3 10.6 12.1 3.9" fill="none" stroke="#a2a2a2" stroke-width="2.4"/></g></svg>
<div class="a" style="left:283px;top:250px;width:76px;height:25px;background:#f0f0f0"></div>
<div class="a" style="left:0;top:274px;width:359px;height:2px;background:#bcbcbc"></div>
<div class="t" style="left:3.74px;top:256.05px;font-size:14px;line-height:14px;font-weight:400;color:#1b1b1b;transform:scaleX(0.9595);">Bruce Sales</div>
<svg style="left:313px;top:255px" width="15" height="15"><g transform="translate(0,-0.5)"><rect x="0" y="0" width="15" height="15" fill="#fafafa"/><rect x="0" y="0" width="14" height="14" fill="#808080"/><rect x="2" y="2" width="12" height="12" fill="#ececec"/></g></svg>
<div class="a" style="left:283px;top:275px;width:76px;height:25px;background:#f0f0f0"></div>
<div class="a" style="left:0;top:299px;width:359px;height:2px;background:#bcbcbc"></div>
<div class="t" style="left:3.74px;top:281.05px;font-size:14px;line-height:14px;font-weight:400;color:#1b1b1b;transform:scaleX(0.9551);">Bruce Sales Emp</div>
<svg style="left:313px;top:280px" width="15" height="15"><g transform="translate(0,-0.5)"><rect x="0" y="0" width="15" height="15" fill="#fafafa"/><rect x="0" y="0" width="14" height="14" fill="#808080"/><rect x="2" y="2" width="12" height="12" fill="#ececec"/></g></svg>
<div class="a" style="left:283px;top:300px;width:76px;height:25px;background:#f0f0f0"></div>
<div class="a" style="left:0;top:324px;width:359px;height:2px;background:#bcbcbc"></div>
<div class="t" style="left:3.69px;top:306.05px;font-size:14px;line-height:14px;font-weight:400;color:#1b1b1b;transform:scaleX(1.0075);">Cameron Cook</div>
<svg style="left:313px;top:305px" width="15" height="15"><g transform="translate(0,-0.5)"><rect x="0" y="0" width="15" height="15" fill="#fafafa"/><rect x="0" y="0" width="14" height="14" fill="#808080"/><rect x="2" y="2" width="12" height="12" fill="#ececec"/></g></svg>
<div class="a" style="left:283px;top:325px;width:76px;height:25px;background:#f0f0f0"></div>
<div class="a" style="left:0;top:349px;width:359px;height:2px;background:#bcbcbc"></div>
<div class="t" style="left:3.66px;top:331.05px;font-size:14px;line-height:14px;font-weight:400;color:#1b1b1b;transform:scaleX(1.0373);">Catherine</div>
<svg style="left:313px;top:330px" width="15" height="15"><g transform="translate(0,-0.5)"><rect x="0" y="0" width="15" height="15" fill="#fafafa"/><rect x="0" y="0" width="14" height="14" fill="#808080"/><rect x="2" y="2" width="12" height="12" fill="#ececec"/><path d="M3.4 6.9L6.3 10.6 12.1 3.9" fill="none" stroke="#a2a2a2" stroke-width="2.4"/></g></svg>
<div class="a" style="left:283px;top:350px;width:76px;height:25px;background:#f0f0f0"></div>
<div class="a" style="left:0;top:374px;width:359px;height:2px;background:#bcbcbc"></div>
<div class="t" style="left:3.69px;top:356.05px;font-size:14px;line-height:14px;font-weight:400;color:#1b1b1b;transform:scaleX(1.0085);">Catherine 1</div>
<svg style="left:313px;top:355px" width="15" height="15"><g transform="translate(0,-0.5)"><rect x="0" y="0" width="15" height="15" fill="#fafafa"/><rect x="0" y="0" width="14" height="14" fill="#808080"/><rect x="2" y="2" width="12" height="12" fill="#ececec"/><path d="M3.4 6.9L6.3 10.6 12.1 3.9" fill="none" stroke="#a2a2a2" stroke-width="2.4"/></g></svg>
<div class="a" style="left:283px;top:375px;width:76px;height:25px;background:#f0f0f0"></div>
<div class="a" style="left:0;top:399px;width:359px;height:2px;background:#bcbcbc"></div>
<div class="t" style="left:3.68px;top:381.05px;font-size:14px;line-height:14px;font-weight:400;color:#1b1b1b;transform:scaleX(1.0225);">Catherine 2</div>
<svg style="left:313px;top:380px" width="15" height="15"><g transform="translate(0,-0.5)"><rect x="0" y="0" width="15" height="15" fill="#fafafa"/><rect x="0" y="0" width="14" height="14" fill="#808080"/><rect x="2" y="2" width="12" height="12" fill="#ececec"/></g></svg>
<div class="a" style="left:283px;top:400px;width:76px;height:25px;background:#f0f0f0"></div>
<div class="a" style="left:0;top:424px;width:359px;height:2px;background:#bcbcbc"></div>
<div class="t" style="left:3.68px;top:406.05px;font-size:14px;line-height:14px;font-weight:400;color:#1b1b1b;transform:scaleX(1.0225);">Catherine 3</div>
<svg style="left:313px;top:405px" width="15" height="15"><g transform="translate(0,-0.5)"><rect x="0" y="0" width="15" height="15" fill="#fafafa"/><rect x="0" y="0" width="14" height="14" fill="#808080"/><rect x="2" y="2" width="12" height="12" fill="#ececec"/><path d="M3.4 6.9L6.3 10.6 12.1 3.9" fill="none" stroke="#a2a2a2" stroke-width="2.4"/></g></svg>
<div class="a" style="left:283px;top:425px;width:76px;height:25px;background:#f0f0f0"></div>
<div class="a" style="left:0;top:449px;width:359px;height:2px;background:#bcbcbc"></div>
<div class="t" style="left:3.66px;top:431.05px;font-size:14px;line-height:14px;font-weight:400;color:#1b1b1b;transform:scaleX(1.0355);">Catherine read only</div>
<svg style="left:313px;top:430px" width="15" height="15"><g transform="translate(0,-0.5)"><rect x="0" y="0" width="15" height="15" fill="#fafafa"/><rect x="0" y="0" width="14" height="14" fill="#808080"/><rect x="2" y="2" width="12" height="12" fill="#ececec"/><path d="M3.4 6.9L6.3 10.6 12.1 3.9" fill="none" stroke="#a2a2a2" stroke-width="2.4"/></g></svg>
<div class="a" style="left:283px;top:450px;width:76px;height:25px;background:#f0f0f0"></div>
<div class="a" style="left:0;top:474px;width:359px;height:2px;background:#bcbcbc"></div>
<div class="t" style="left:3.71px;top:456.05px;font-size:14px;line-height:14px;font-weight:400;color:#1b1b1b;transform:scaleX(0.9917);">Chelsea Cork</div>
<svg style="left:313px;top:455px" width="15" height="15"><g transform="translate(0,-0.5)"><rect x="0" y="0" width="15" height="15" fill="#fafafa"/><rect x="0" y="0" width="14" height="14" fill="#808080"/><rect x="2" y="2" width="12" height="12" fill="#ececec"/></g></svg>
<div class="a" style="left:283px;top:475px;width:76px;height:25px;background:#f0f0f0"></div>
<div class="a" style="left:0;top:499px;width:359px;height:2px;background:#bcbcbc"></div>
<div class="t" style="left:3.70px;top:481.05px;font-size:14px;line-height:14px;font-weight:400;color:#1b1b1b;transform:scaleX(0.9971);">Craig Clark</div>
<svg style="left:313px;top:480px" width="15" height="15"><g transform="translate(0,-0.5)"><rect x="0" y="0" width="15" height="15" fill="#fafafa"/><rect x="0" y="0" width="14" height="14" fill="#808080"/><rect x="2" y="2" width="12" height="12" fill="#ececec"/></g></svg>
<div class="a" style="left:283px;top:500px;width:76px;height:25px;background:#f0f0f0"></div>
<div class="a" style="left:0;top:524px;width:359px;height:2px;background:#bcbcbc"></div>
<div class="t" style="left:3.64px;top:506.05px;font-size:14px;line-height:14px;font-weight:400;color:#1b1b1b;transform:scaleX(1.0632);">Daniel</div>
<svg style="left:313px;top:505px" width="15" height="15"><g transform="translate(0,-0.5)"><rect x="0" y="0" width="15" height="15" fill="#fafafa"/><rect x="0" y="0" width="14" height="14" fill="#808080"/><rect x="2" y="2" width="12" height="12" fill="#ececec"/></g></svg>
<div class="a" style="left:283px;top:525px;width:76px;height:25px;background:#f0f0f0"></div>
<div class="a" style="left:0;top:549px;width:359px;height:2px;background:#bcbcbc"></div>
<div class="t" style="left:3.66px;top:531.05px;font-size:14px;line-height:14px;font-weight:400;color:#1b1b1b;transform:scaleX(1.0382);">David</div>
<svg style="left:313px;top:530px" width="15" height="15"><g transform="translate(0,-0.5)"><rect x="0" y="0" width="15" height="15" fill="#fafafa"/><rect x="0" y="0" width="14" height="14" fill="#808080"/><rect x="2" y="2" width="12" height="12" fill="#ececec"/></g></svg>
<div class="a" style="left:283px;top:550px;width:76px;height:25px;background:#f0f0f0"></div>
<div class="a" style="left:0;top:574px;width:359px;height:2px;background:#bcbcbc"></div>
<svg style="left:313px;top:555px" width="15" height="15"><g transform="translate(0,-0.5)"><rect x="0" y="0" width="15" height="15" fill="#fafafa"/><rect x="0" y="0" width="14" height="14" fill="#808080"/><rect x="2" y="2" width="12" height="12" fill="#ececec"/><path d="M3.4 6.9L6.3 10.6 12.1 3.9" fill="none" stroke="#a2a2a2" stroke-width="2.4"/></g></svg>
</div>
<div class="a" style="left:1150px;top:242px;width:1.7px;height:582px;background:#bcbcbc"></div>
<div class="a" style="left:1226px;top:242px;width:14px;height:582px;background:#fff;border-left:1px solid #d6d8db"></div>
<div class="a" style="left:1226px;top:254px;width:14px;height:1px;background:#d6d8db"></div>
<div class="a" style="left:1226px;top:811px;width:14px;height:1px;background:#d6d8db"></div>
<div class="a" style="left:1226px;top:359px;width:14px;height:142px;background:#c8cbd0"></div>
<svg style="left:1229px;top:246px" width="9" height="6" fill="none" stroke="#cdd0d4" stroke-width="1"><path d="M1.5 4.5L4.5 1.5 7.5 4.5"/></svg>
<svg style="left:1229px;top:815px" width="9" height="6" fill="none" stroke="#cdd0d4" stroke-width="1"><path d="M1.5 1.5L4.5 4.5 7.5 1.5"/></svg>
</body></html>
